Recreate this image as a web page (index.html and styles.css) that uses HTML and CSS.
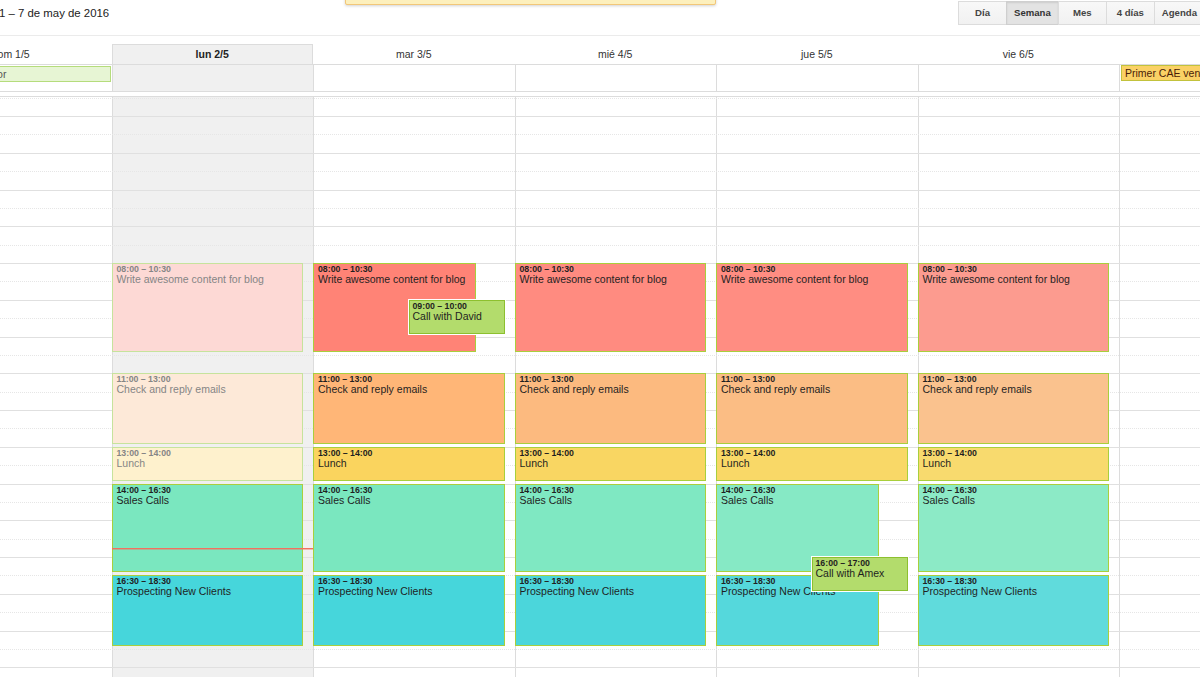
FILE: index.html
```html
<!DOCTYPE html>
<html lang="es">
<head>
<meta charset="utf-8">
<title>Calendario - Semana</title>
<link rel="stylesheet" href="styles.css">
</head>
<body>
<div class="app">
  <div class="notice"></div>
  <header class="toolbar">
    <div class="range">1 – 7 de may de 2016</div>
    <div class="views">
      <span class="vbtn">Día</span>
      <span class="vbtn sel">Semana</span>
      <span class="vbtn">Mes</span>
      <span class="vbtn">4 días</span>
      <span class="vbtn">Agenda</span>
    </div>
  </header>
  <div class="viewport">
    <div class="week">
      <div class="dayheads">
        <div class="dh">dom 1/5</div>
        <div class="dh today">lun 2/5</div>
        <div class="dh">mar 3/5</div>
        <div class="dh">mié 4/5</div>
        <div class="dh">jue 5/5</div>
        <div class="dh">vie 6/5</div>
        <div class="dh">sáb 7/5</div>
      </div>
      <div class="allday">
        <div class="adc"><div class="adev holiday">Día del Trabajador</div></div>
        <div class="adc today"></div>
        <div class="adc"></div>
        <div class="adc"></div>
        <div class="adc"></div>
        <div class="adc"></div>
        <div class="adc"><div class="adev tax">Primer CAE vencimiento</div></div>
      </div>
      <div class="gap"></div>
      <div class="timeline">
        <div class="layer colbg">
          <div class="cb"></div>
          <div class="cb today"></div>
          <div class="cb"></div>
          <div class="cb"></div>
          <div class="cb"></div>
          <div class="cb"></div>
          <div class="cb"></div>
        </div>
        <div class="layer rows">
          <div class="slot"></div><div class="slot"></div>
          <div class="slot"></div><div class="slot"></div>
          <div class="slot"></div><div class="slot"></div>
          <div class="slot"></div><div class="slot"></div>
          <div class="slot"></div><div class="slot"></div>
          <div class="slot"></div><div class="slot"></div>
          <div class="slot"></div><div class="slot"></div>
          <div class="slot"></div><div class="slot"></div>
          <div class="slot"></div><div class="slot"></div>
          <div class="slot"></div><div class="slot"></div>
          <div class="slot"></div><div class="slot"></div>
          <div class="slot"></div><div class="slot"></div>
          <div class="slot"></div><div class="slot"></div>
          <div class="slot"></div><div class="slot"></div>
          <div class="slot"></div><div class="slot"></div>
          <div class="slot"></div><div class="slot"></div>
          <div class="slot"></div><div class="slot"></div>
        </div>
        <div class="layer cols">
          <div class="col"></div>
          <div class="col d-lun">
            <div class="ev red past" style="top:183.75px;height:88.875px"><div class="t">08:00 – 10:30</div><div class="n">Write awesome content for blog</div></div>
            <div class="ev orange past" style="top:294px;height:70.5px"><div class="t">11:00 – 13:00</div><div class="n">Check and reply emails</div></div>
            <div class="ev yellow past" style="top:367.5px;height:33.75px"><div class="t">13:00 – 14:00</div><div class="n">Lunch</div></div>
            <div class="ev green" style="top:404.25px;height:88.875px"><div class="t">14:00 – 16:30</div><div class="n">Sales Calls</div></div>
            <div class="ev cyan" style="top:496.125px;height:70.5px"><div class="t">16:30 – 18:30</div><div class="n">Prospecting New Clients</div></div>
            <div class="now" style="top:468.5px"></div>
          </div>
          <div class="col d-mar">
            <div class="ev red narrow" style="top:183.75px;height:88.875px"><div class="t">08:00 – 10:30</div><div class="n">Write awesome content for blog</div></div>
            <div class="ev pop" style="top:220.5px;height:33.75px"><div class="t">09:00 – 10:00</div><div class="n">Call with David</div></div>
            <div class="ev orange" style="top:294px;height:70.5px"><div class="t">11:00 – 13:00</div><div class="n">Check and reply emails</div></div>
            <div class="ev yellow" style="top:367.5px;height:33.75px"><div class="t">13:00 – 14:00</div><div class="n">Lunch</div></div>
            <div class="ev green" style="top:404.25px;height:88.875px"><div class="t">14:00 – 16:30</div><div class="n">Sales Calls</div></div>
            <div class="ev cyan" style="top:496.125px;height:70.5px"><div class="t">16:30 – 18:30</div><div class="n">Prospecting New Clients</div></div>
          </div>
          <div class="col d-mie">
            <div class="ev red" style="top:183.75px;height:88.875px"><div class="t">08:00 – 10:30</div><div class="n">Write awesome content for blog</div></div>
            <div class="ev orange" style="top:294px;height:70.5px"><div class="t">11:00 – 13:00</div><div class="n">Check and reply emails</div></div>
            <div class="ev yellow" style="top:367.5px;height:33.75px"><div class="t">13:00 – 14:00</div><div class="n">Lunch</div></div>
            <div class="ev green" style="top:404.25px;height:88.875px"><div class="t">14:00 – 16:30</div><div class="n">Sales Calls</div></div>
            <div class="ev cyan" style="top:496.125px;height:70.5px"><div class="t">16:30 – 18:30</div><div class="n">Prospecting New Clients</div></div>
          </div>
          <div class="col d-jue">
            <div class="ev red" style="top:183.75px;height:88.875px"><div class="t">08:00 – 10:30</div><div class="n">Write awesome content for blog</div></div>
            <div class="ev orange" style="top:294px;height:70.5px"><div class="t">11:00 – 13:00</div><div class="n">Check and reply emails</div></div>
            <div class="ev yellow" style="top:367.5px;height:33.75px"><div class="t">13:00 – 14:00</div><div class="n">Lunch</div></div>
            <div class="ev green narrow" style="top:404.25px;height:88.875px"><div class="t">14:00 – 16:30</div><div class="n">Sales Calls</div></div>
            <div class="ev cyan narrow" style="top:496.125px;height:70.5px"><div class="t">16:30 – 18:30</div><div class="n">Prospecting New Clients</div></div>
            <div class="ev pop" style="top:477.75px;height:33.75px"><div class="t">16:00 – 17:00</div><div class="n">Call with Amex</div></div>
          </div>
          <div class="col d-vie">
            <div class="ev red" style="top:183.75px;height:88.875px"><div class="t">08:00 – 10:30</div><div class="n">Write awesome content for blog</div></div>
            <div class="ev orange" style="top:294px;height:70.5px"><div class="t">11:00 – 13:00</div><div class="n">Check and reply emails</div></div>
            <div class="ev yellow" style="top:367.5px;height:33.75px"><div class="t">13:00 – 14:00</div><div class="n">Lunch</div></div>
            <div class="ev green" style="top:404.25px;height:88.875px"><div class="t">14:00 – 16:30</div><div class="n">Sales Calls</div></div>
            <div class="ev cyan" style="top:496.125px;height:70.5px"><div class="t">16:30 – 18:30</div><div class="n">Prospecting New Clients</div></div>
          </div>
          <div class="col"></div>
        </div>
      </div>
    </div>
  </div>
</div>
</body>
</html>
```

FILE: styles.css
```css
html, body {
  margin: 0;
  padding: 0;
  background: #fff;
}
body {
  width: 1200px;
  height: 677px;
  overflow: hidden;
  font-family: "Liberation Sans", Arial, sans-serif;
  color: #222;
}
.app {
  position: relative;
  width: 1200px;
  height: 677px;
  overflow: hidden;
}

/* floating notification at very top */
.notice {
  position: absolute;
  left: 345px;
  top: -22px;
  width: 369px;
  height: 25px;
  background: #fdf0bd;
  border: 1px solid #f2c779;
  border-radius: 0 0 2px 2px;
  box-shadow: 0 1px 3px rgba(0, 0, 0, 0.18);
  z-index: 5;
}

/* toolbar */
.toolbar {
  height: 35px;
  border-bottom: 1px solid #ebebeb;
  display: flex;
  justify-content: space-between;
  align-items: flex-start;
}
.range {
  margin-left: -1px;
  margin-top: 6px;
  font-size: 11.4px;
  line-height: 15px;
  color: #222;
  white-space: nowrap;
}
.views {
  display: flex;
  margin-top: 1px;
  margin-right: -5px;
}
.vbtn {
  box-sizing: border-box;
  min-width: 49px;
  padding: 0 7px;
  height: 24px;
  line-height: 22px;
  text-align: center;
  font-size: 9.6px;
  font-weight: bold;
  color: #444;
  border: 1px solid #dcdcdc;
  margin-left: -1px;
  background: linear-gradient(#f8f8f8, #f1f1f1);
  white-space: nowrap;
}
.vbtn.sel {
  background: #e3e3e3;
  border-color: #cfcfcf;
  box-shadow: inset 0 1px 2px rgba(0, 0, 0, 0.1);
  color: #333;
}

/* week area */
.viewport {
  width: 1200px;
  overflow: hidden;
}
.week {
  margin-left: -90px;
  width: 1410px;
}
.dayheads,
.allday,
.colbg,
.cols {
  display: grid;
  grid-template-columns: repeat(7, 201.5px);
}
.dayheads {
  height: 28px;
}
.dh {
  display: flex;
  align-items: flex-end;
  justify-content: center;
  padding-bottom: 4px;
  font-size: 10.5px;
  line-height: 12px;
  color: #333;
  white-space: nowrap;
}
.dh.today {
  margin-top: 8px;
  background: #f0f0f0;
  border: 1px solid #dcdcdc;
  border-bottom: none;
  font-weight: bold;
  color: #222;
}
.allday {
  height: 26px;
  border-top: 1px solid #dcdcdc;
  border-bottom: 1px solid #dcdcdc;
}
.adc {
  border-left: 1px solid #dcdcdc;
  overflow: hidden;
}
.adc.today {
  background: #f0f0f0;
}
.adev {
  margin: 1px 1px 0 1px;
  height: 14px;
  line-height: 14px;
  padding: 0 3px;
  font-size: 10.5px;
  white-space: nowrap;
  overflow: hidden;
}
.adev.holiday {
  padding-left: 7px;
  background: #e7f5d4;
  border: 1px solid #b5dc7c;
  color: #555;
}
.adev.tax {
  margin-top: 0;
  background: #fad165;
  border: 1px solid #c2c23c;
  color: #4a1c08;
}
.gap {
  height: 4px;
}

/* time grid */
.timeline {
  display: grid;
  height: 580px;
  border-top: 1px solid #dcdcdc;
  overflow: hidden;
}
.layer {
  grid-area: 1 / 1;
}
.colbg {
  height: 620px;
}
.cb {
  border-left: 1px solid #dcdcdc;
}
.cb.today {
  background: #f0f0f0;
}
.rows {
  margin-top: -17.75px;
}
.slot {
  box-sizing: border-box;
  height: 18.375px;
  border-top: 1px solid #e0e0e0;
}
.slot:nth-child(even) {
  border-top: 1px dotted #e6e6e6;
}
.cols {
  margin-top: -17.75px;
  height: 640px;
}
.col {
  position: relative;
}

/* events */
.ev {
  position: absolute;
  left: 0;
  width: calc(100% - 10px);
  box-sizing: border-box;
  border: 1px solid #a9cf3c;
  padding: 0 3px 0 4px;
  overflow: hidden;
  color: #1f1f1f;
  z-index: 1;
}
.ev.narrow {
  width: 163px;
}
.ev .t {
  font-size: 8.75px;
  line-height: 10px;
  font-weight: bold;
  white-space: nowrap;
}
.ev .n {
  font-size: 10.5px;
  line-height: 11px;
  white-space: nowrap;
}
.ev.pop {
  left: 95.5px;
  width: 96px;
  padding-left: 3px;
  background: #b3dc6c;
  border-color: #8dc02f;
  box-shadow: 0 0 0 1px #fff;
  z-index: 3;
}

.red { background: #ff8a7e; }
.orange { background: #fbba80; }
.yellow { background: #f9d662; }
.green { background: #7ae7bf; }
.cyan { background: #46d6db; }

.d-mar .red { background: #ff8376; }
.d-mar .orange { background: #ffb677; }
.d-mar .yellow { background: #fad45e; }
.d-mar .green { background: #7ae7bf; }
.d-mar .cyan { background: #46d6db; }

.d-mie .red { background: #ff8b80; }
.d-mie .orange { background: #fcba7f; }
.d-mie .yellow { background: #f9d662; }
.d-mie .green { background: #7fe8c2; }
.d-mie .cyan { background: #4bd6db; }

.d-jue .red { background: #ff8d82; }
.d-jue .orange { background: #fbbd84; }
.d-jue .yellow { background: #f9d867; }
.d-jue .green { background: #86e9c5; }
.d-jue .cyan { background: #55d8dc; }

.d-vie .red { background: #fc9b8f; }
.d-vie .orange { background: #fac28e; }
.d-vie .yellow { background: #f8da6e; }
.d-vie .green { background: #8ceac6; }
.d-vie .cyan { background: #60dbdc; }

.d-lun .ev.past {
  border-color: #c6e39c;
  color: #858585;
}
.d-lun .red.past { background: #fdd9d5; }
.d-lun .orange.past { background: #fde9d8; }
.d-lun .yellow.past { background: #fef1cd; }

.now {
  position: absolute;
  left: 0;
  right: 0;
  height: 1px;
  background: #f2705f;
  box-shadow: 0 1px 0 rgba(242, 112, 95, 0.45);
  z-index: 4;
}
```
